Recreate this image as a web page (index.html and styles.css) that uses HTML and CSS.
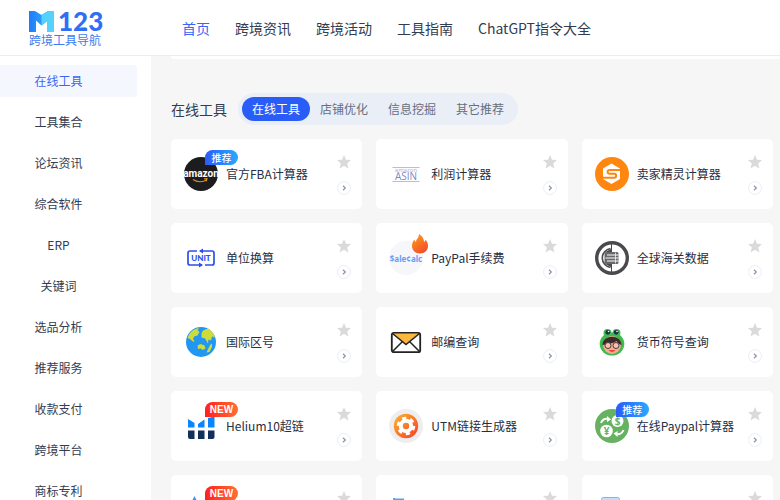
FILE: index.html
```html
<!DOCTYPE html>
<html lang="zh-CN">
<head>
<meta charset="utf-8">
<meta name="viewport" content="width=device-width, initial-scale=1">
<title>M123 跨境工具导航</title>
<link rel="stylesheet" href="styles.css">
</head>
<body>
<svg class="sprite" aria-hidden="true">
  <symbol id="star" viewBox="0 0 14 14"><path d="M7 0l2 4.700 5 .4-3.800 3.400 1.200 5L7 10.800l-4.400 2.700 1.200-5L0 5.100l5-.4z" fill="#dadada"/></symbol>
  <symbol id="arrow" viewBox="0 0 14 14"><circle cx="7" cy="7" r="6.400" fill="#fff" stroke="#e9edf5"/><path d="M6 4.800L8.300 7 6 9.200" fill="none" stroke="#8d95a6" stroke-width="1.200"/></symbol>
</svg>

<header class="header">
  <a class="logo" href="#">
    <span class="logo-mark">
      <svg width="25" height="21" viewBox="0 0 25 21" aria-hidden="true">
        <defs><linearGradient id="m" x1="0" x2="1"><stop offset="0" stop-color="#1f7cf8"/><stop offset=".55" stop-color="#2c9dfb"/><stop offset="1" stop-color="#56dcfd"/></linearGradient></defs>
        <path d="M0 0h6l6.500 4L19 0h6v21h-6V9.500l-6.500 5L7 9.500V21H0z" fill="url(#m)"/>
        <path d="M19 0h6v21h-7V9.500l-5.500 5V4z" fill="#55d2fc"/>
      </svg>
      <span class="logo-num">123</span>
    </span>
    <span class="logo-sub">跨境工具导航</span>
  </a>
  <nav class="nav">
    <a class="active" href="#">首页</a>
    <a href="#">跨境资讯</a>
    <a href="#">跨境活动</a>
    <a href="#">工具指南</a>
    <a href="#">ChatGPT指令大全</a>
  </nav>
</header>

<div class="layout">
  <nav class="sidebar">
    <a class="active" href="#">在线工具</a>
    <a href="#">工具集合</a>
    <a href="#">论坛资讯</a>
    <a href="#">综合软件</a>
    <a href="#">ERP</a>
    <a href="#">关键词</a>
    <a href="#">选品分析</a>
    <a href="#">推荐服务</a>
    <a href="#">收款支付</a>
    <a href="#">跨境平台</a>
    <a href="#">商标专利</a>
  </nav>

  <main class="main">
    <div class="panel-end"></div>
    <div class="section-head">
      <h2>在线工具</h2>
      <div class="tabs">
        <button class="active" type="button">在线工具</button>
        <button type="button">店铺优化</button>
        <button type="button">信息挖掘</button>
        <button type="button">其它推荐</button>
      </div>
    </div>

    <div class="grid">
      <article class="card">
        <svg class="icon" viewBox="0 0 34 34" aria-hidden="true">
          <circle cx="17" cy="17" r="17" fill="#1c1c1e"/>
          <text x="17" y="20" text-anchor="middle" class="t-amazon">amazon</text>
          <path d="M9 22.500c4 3 10 3 13.500.3M20 21.800l3-.2-.8 2.800" fill="none" stroke="#d98f22" stroke-width="1.100"/>
        </svg>
        <a class="name" href="#">官方FBA计算器</a>
        <span class="badge">推荐</span>
        <div class="actions"><button type="button" aria-label="收藏"><svg><use href="#star"/></svg></button><a href="#" aria-label="打开"><svg><use href="#arrow"/></svg></a></div>
      </article>

      <article class="card">
        <svg class="icon" viewBox="0 0 34 34" aria-hidden="true">
          <path d="M3.500 10.500h27M3.500 24.500h27" stroke="#b9bddd"/>
          <text x="17" y="15" text-anchor="middle" class="t-asin-top">amazon</text>
          <text x="17" y="23" text-anchor="middle" class="t-asin">ASIN</text>
        </svg>
        <a class="name" href="#">利润计算器</a>
        <div class="actions"><button type="button" aria-label="收藏"><svg><use href="#star"/></svg></button><a href="#" aria-label="打开"><svg><use href="#arrow"/></svg></a></div>
      </article>

      <article class="card">
        <svg class="icon" viewBox="0 0 34 34" aria-hidden="true">
          <circle cx="17" cy="17" r="17" fill="#ff8710"/>
          <path d="M16.500 6.500l8.500 5v10.500l-8.500 5-8.500-5V11.500z" fill="#fff"/>
          <path d="M25.500 13H14.500c-2.500 0-2.500 3.700 0 3.700h4.700c2.600 0 2.600 4 0 4H7.500" fill="none" stroke="#ff8710" stroke-width="2"/>
        </svg>
        <a class="name" href="#">卖家精灵计算器</a>
        <div class="actions"><button type="button" aria-label="收藏"><svg><use href="#star"/></svg></button><a href="#" aria-label="打开"><svg><use href="#arrow"/></svg></a></div>
      </article>

      <article class="card">
        <svg class="icon" viewBox="0 0 34 34" aria-hidden="true">
          <path d="M13 10H6Q4 10 4 12v10q0 2 2 2h7M21 24h7q2 0 2-2V12q0-2-2-2h-7M16 10h8M10 24h8" fill="none" stroke="#2b50ea" stroke-width="1.700"/>
          <path d="M15 10l4-2.500v5zM19 24l-4-2.500v5z" fill="#2b50ea"/>
          <text x="17" y="20" text-anchor="middle" class="t-unit">UNIT</text>
        </svg>
        <a class="name" href="#">单位换算</a>
        <div class="actions"><button type="button" aria-label="收藏"><svg><use href="#star"/></svg></button><a href="#" aria-label="打开"><svg><use href="#arrow"/></svg></a></div>
      </article>

      <article class="card">
        <svg class="icon" viewBox="0 0 34 34" aria-hidden="true">
          <circle cx="17" cy="17" r="17" fill="#f5f7fb"/>
          <text x="17" y="21" text-anchor="middle" class="t-sale">$ale¢alc</text>
        </svg>
        <a class="name" href="#">PayPal手续费</a>
        <svg class="flame" viewBox="0 0 16 20" aria-hidden="true">
          <defs><linearGradient id="f" x1="0" x2=".6" y1="0" y2="1"><stop offset="0" stop-color="#ffa01c"/><stop offset="1" stop-color="#f4502a"/></linearGradient></defs>
          <path d="M7 0c4 3 5 5 5 8 1-.5 1.500-1.500 1.500-2.500 2 2.500 2.500 4.500 2.500 6.500 0 4.500-3.500 7.500-8 7.500s-8-3-8-7.500c0-3 1-5 2.500-6.500 0 1 .5 2 1.500 2.500C4 5 7 4 7 0z" fill="url(#f)"/>
        </svg>
        <div class="actions"><button type="button" aria-label="收藏"><svg><use href="#star"/></svg></button><a href="#" aria-label="打开"><svg><use href="#arrow"/></svg></a></div>
      </article>

      <article class="card">
        <svg class="icon" viewBox="0 0 34 34" aria-hidden="true">
          <circle cx="17" cy="17" r="15.300" fill="#fff" stroke="#4a4a4e" stroke-width="3.400"/>
          <path d="M15.500 7.500a9.600 9.600 0 000 19" fill="none" stroke="#4a4a4e" stroke-width="1.600"/>
          <path d="M16.500 3v8M16.500 23v8" stroke="#4a4a4e"/>
          <path d="M16.500 7.500v3.500h-6zM16.500 26.500V23h-6z" fill="#4a4a4e"/>
          <rect x="9.500" y="11" width="14" height="12" rx="1.500" fill="#68686c"/>
          <path d="M12 14h11.500M10.500 17h13M12 20h11.500" stroke="#fff" stroke-width="1"/>
          <path d="M20.500 11.500v11" stroke="#fff" stroke-width=".7"/>
        </svg>
        <a class="name" href="#">全球海关数据</a>
        <div class="actions"><button type="button" aria-label="收藏"><svg><use href="#star"/></svg></button><a href="#" aria-label="打开"><svg><use href="#arrow"/></svg></a></div>
      </article>

      <article class="card">
        <svg class="icon" viewBox="0 0 34 34" aria-hidden="true">
          <circle cx="17" cy="17" r="15" fill="#2196f3"/>
          <path d="M5 9.500C8 5 12 3.500 15 3l-1.500 2 2 2-2 3.500-3.500 1-1 3 1.500 1-1 1.500L6 14l-2.500-1zM19 5.500l5-2c4 2 6 5.500 7 9l-3-1-1 4-2.500-1-.5 4-3-5-3.500-1v-4zM13.500 20.500l3-1.500 4 1.500 1 3-3 1.500-1.500-1.500-3 .5zM26 20l2-1.500v3.500l-2.500 5-3 .5z" fill="#cddc39"/>
        </svg>
        <a class="name" href="#">国际区号</a>
        <div class="actions"><button type="button" aria-label="收藏"><svg><use href="#star"/></svg></button><a href="#" aria-label="打开"><svg><use href="#arrow"/></svg></a></div>
      </article>

      <article class="card">
        <svg class="icon" viewBox="0 0 34 34" aria-hidden="true">
          <rect x="2.800" y="7.800" width="28.400" height="19.400" rx="2" fill="#fff" stroke="#222" stroke-width="1.800"/>
          <path d="M4 8.700h26L17 19.500z" fill="#fbb73e"/>
          <path d="M3.500 8.500L17 19.500 30.500 8.500M3.500 26.500l9.500-9.500M30.500 26.500L21 17" fill="none" stroke="#222" stroke-width="1.500"/>
        </svg>
        <a class="name" href="#">邮编查询</a>
        <div class="actions"><button type="button" aria-label="收藏"><svg><use href="#star"/></svg></button><a href="#" aria-label="打开"><svg><use href="#arrow"/></svg></a></div>
      </article>

      <article class="card">
        <svg class="icon" viewBox="0 0 34 34" aria-hidden="true">
          <circle cx="12.500" cy="8" r="4" fill="#46bd51"/><circle cx="21.500" cy="8" r="4" fill="#46bd51"/>
          <ellipse cx="17" cy="19" rx="12.300" ry="11.500" fill="#3fb950"/>
          <circle cx="12.800" cy="7.300" r="2.400" fill="#16324a"/><circle cx="21.200" cy="7.300" r="2.400" fill="#16324a"/>
          <circle cx="13.500" cy="6.500" r=".8" fill="#fff"/><circle cx="22" cy="6.500" r=".8" fill="#fff"/>
          <circle cx="17" cy="20" r="9" fill="#f5ab91"/>
          <path d="M7.500 20c0-11 19-11 19 0-2-.5-4-2-5-4-4 3-9 3-14 4z" fill="#3a2b2b"/>
          <circle cx="13" cy="20.500" r="3" fill="#f7c2ae" stroke="#4c3c3c"/><circle cx="21" cy="20.500" r="3" fill="#f7c2ae" stroke="#4c3c3c"/>
          <path d="M13.500 25h7q-3.500 4-7 0z" fill="#e8413f"/>
        </svg>
        <a class="name" href="#">货币符号查询</a>
        <div class="actions"><button type="button" aria-label="收藏"><svg><use href="#star"/></svg></button><a href="#" aria-label="打开"><svg><use href="#arrow"/></svg></a></div>
      </article>

      <article class="card">
        <svg class="icon" viewBox="0 0 34 34" aria-hidden="true">
          <path d="M4 10l6.500 4v4.500H4zM14 15l6.500-4.500v8H14zM24 9l6.500-1.500v11H24z" fill="#0a84ff"/>
          <path d="M4 21.500h6.500V30H6q-2 0-2-2zM14 21.500h6.500V30H14zM24 21.500h6.500V28q0 2-2 2H24z" fill="#12305c"/>
        </svg>
        <a class="name" href="#">Helium10超链</a>
        <span class="badge new">NEW</span>
        <div class="actions"><button type="button" aria-label="收藏"><svg><use href="#star"/></svg></button><a href="#" aria-label="打开"><svg><use href="#arrow"/></svg></a></div>
      </article>

      <article class="card">
        <svg class="icon" viewBox="0 0 34 34" aria-hidden="true">
          <defs><linearGradient id="g" x1="0" x2="1" y1="0" y2="1"><stop offset=".2" stop-color="#f9a02b"/><stop offset=".9" stop-color="#f9482b"/></linearGradient></defs>
          <circle cx="17" cy="17" r="17" fill="#eee"/>
          <circle cx="17" cy="17" r="12.200" fill="url(#g)"/>
          <circle cx="17" cy="17" r="5.200" fill="none" stroke="#fff" stroke-width="4"/>
          <circle cx="17" cy="17" r="7.600" fill="none" stroke="#fff" stroke-width="3.400" stroke-dasharray="4 3.960"/>
        </svg>
        <a class="name" href="#">UTM链接生成器</a>
        <div class="actions"><button type="button" aria-label="收藏"><svg><use href="#star"/></svg></button><a href="#" aria-label="打开"><svg><use href="#arrow"/></svg></a></div>
      </article>

      <article class="card">
        <svg class="icon" viewBox="0 0 34 34" aria-hidden="true">
          <circle cx="17" cy="17" r="17" fill="#66b262"/>
          <circle cx="22.500" cy="12" r="6" fill="#fff"/><circle cx="11.500" cy="22" r="6.300" fill="#fff"/>
          <text x="22.500" y="15.500" text-anchor="middle" class="t-coin">$</text>
          <text x="11.500" y="25.500" text-anchor="middle" class="t-coin">¥</text>
          <path d="M6 14q2-5 7-4M28.500 21q-2 5-7 4" fill="none" stroke="#fff" stroke-width="2"/>
          <path d="M12 7l4 3.500-4 2.500zM22.500 28l-4-3.500 4-2.500z" fill="#fff"/>
        </svg>
        <a class="name" href="#">在线Paypal计算器</a>
        <span class="badge">推荐</span>
        <div class="actions"><button type="button" aria-label="收藏"><svg><use href="#star"/></svg></button><a href="#" aria-label="打开"><svg><use href="#arrow"/></svg></a></div>
      </article>

      <article class="card">
        <svg class="icon" viewBox="0 0 34 34" aria-hidden="true"><path d="M10.500 3L18 18H3z" fill="#3a95f5"/></svg>
        <span class="badge new">NEW</span>
        <div class="actions"><button type="button" aria-label="收藏"><svg><use href="#star"/></svg></button><a href="#" aria-label="打开"><svg><use href="#arrow"/></svg></a></div>
      </article>
      <article class="card">
        <svg class="icon" viewBox="0 0 34 34" aria-hidden="true"><path d="M5 5v25M5 6.500h10" fill="none" stroke="#5a9de8" stroke-width="1.800"/></svg>
        <div class="actions"><button type="button" aria-label="收藏"><svg><use href="#star"/></svg></button><a href="#" aria-label="打开"><svg><use href="#arrow"/></svg></a></div>
      </article>
      <article class="card">
        <svg class="icon" viewBox="0 0 34 34" aria-hidden="true"><rect x="6.500" y="4.500" width="18" height="26" rx="2" fill="#c4dffc" stroke="#7db5f5"/></svg>
        <div class="actions"><button type="button" aria-label="收藏"><svg><use href="#star"/></svg></button><a href="#" aria-label="打开"><svg><use href="#arrow"/></svg></a></div>
      </article>
    </div>
  </main>
</div>
</body>
</html>
```
FILE: styles.css
```css
* { box-sizing: border-box; }

body {
  margin: 0;
  height: 100vh;
  display: flex;
  flex-direction: column;
  overflow: hidden;
  background: #fff;
  color: #333c50;
  font: 12px/20px "Noto Sans CJK SC", "Noto Sans", sans-serif;
}

a { color: inherit; text-decoration: none; }

button {
  margin: 0;
  padding: 0;
  border: 0;
  background: none;
  color: inherit;
  font: inherit;
  cursor: pointer;
}

.sprite { display: none; }

.header {
  flex: none;
  display: flex;
  align-items: center;
  height: 56px;
  border-bottom: 1px solid #ececec;
}

.logo {
  flex: none;
  width: 182px;
  padding: 3px 0 0 29px;
}

.logo-mark { display: flex; align-items: center; gap: 4px; height: 22px; }

.logo-num {
  color: #2e6ff5;
  font: 900 26px/22px Lato, sans-serif;
}

.logo-sub {
  display: block;
  color: #3f7bf0;
  line-height: 16px;
}

.nav { display: flex; gap: 25px; font-size: 14px; white-space: nowrap; }

.nav .active,
.sidebar .active { color: #3b66f5; }

.layout { flex: 1; display: flex; min-height: 0; }

.sidebar {
  flex: none;
  display: flex;
  flex-direction: column;
  gap: 9px;
  width: 151px;
  padding: 9px 14px 0 0;
  overflow: hidden;
}

.sidebar a {
  flex: none;
  padding: 6px 20px 6px 0;
  border-radius: 0 3px 3px 0;
  text-align: center;
}

.sidebar .active { background: #f5f7ff; }

.main {
  flex: 1;
  min-width: 0;
  padding: 0 7px 0 20px;
  overflow: hidden;
  background: #f6f6f6;
}

.panel-end {
  height: 3px;
  margin-right: -7px;
  border-radius: 0 0 0 3px;
  background: #fff;
}

.section-head {
  display: flex;
  align-items: center;
  gap: 11px;
  margin: 34px 0 14px;
}

.section-head h2 { margin: 0; font-size: 14px; font-weight: 400; }

.tabs {
  display: flex;
  padding: 4px;
  border-radius: 16px;
  background: #e9eef7;
  color: #666f80;
}

.tabs button {
  padding: 2px 10px;
  border-radius: 12px;
}

.tabs .active { background: #2a5cf8; color: #fff; }

.grid {
  display: grid;
  grid-template-columns: repeat(3, 1fr);
  gap: 14px;
}

.card {
  position: relative;
  display: flex;
  align-items: center;
  gap: 8px;
  height: 70px;
  padding: 0 11px 0 13px;
  border-radius: 5px;
  background: #fff;
}

.icon { flex: none; width: 34px; height: 34px; }

.name { color: #262e42; white-space: nowrap; }

.actions {
  display: flex;
  flex-direction: column;
  gap: 12px;
  margin-left: auto;
  padding-top: 2px;
}

.actions button,
.actions a { display: block; width: 14px; height: 14px; }

.actions svg { display: block; width: 14px; height: 14px; }

.badge {
  position: absolute;
  top: 11px;
  left: 34px;
  width: 33px;
  border-radius: 8px 8px 8px 0;
  background: linear-gradient(90deg, #2b5bfa, #2aa8ff);
  color: #fff;
  font-size: 10px;
  font-weight: 500;
  line-height: 15px;
  text-align: center;
}

.badge.new {
  background: linear-gradient(90deg, #ff2020, #ff7030);
  font-family: "Liberation Sans", sans-serif;
  font-weight: 700;
}

.flame { position: absolute; top: 11px; left: 36px; width: 16px; height: 20px; }

.t-amazon { fill: #fff; font: 700 10px Roboto, sans-serif; }
.t-asin-top { fill: #a9aed6; font: 6px "Open Sans", sans-serif; }
.t-asin { fill: #8087c2; font: 10px "Open Sans", sans-serif; }
.t-unit { fill: #2b50ea; font: 900 8px Lato, sans-serif; }
.t-sale { fill: #6c9cf5; font: 700 8px "Noto Sans", sans-serif; }
.t-coin { fill: #66b262; font: 700 10px "Noto Sans", sans-serif; }
```
